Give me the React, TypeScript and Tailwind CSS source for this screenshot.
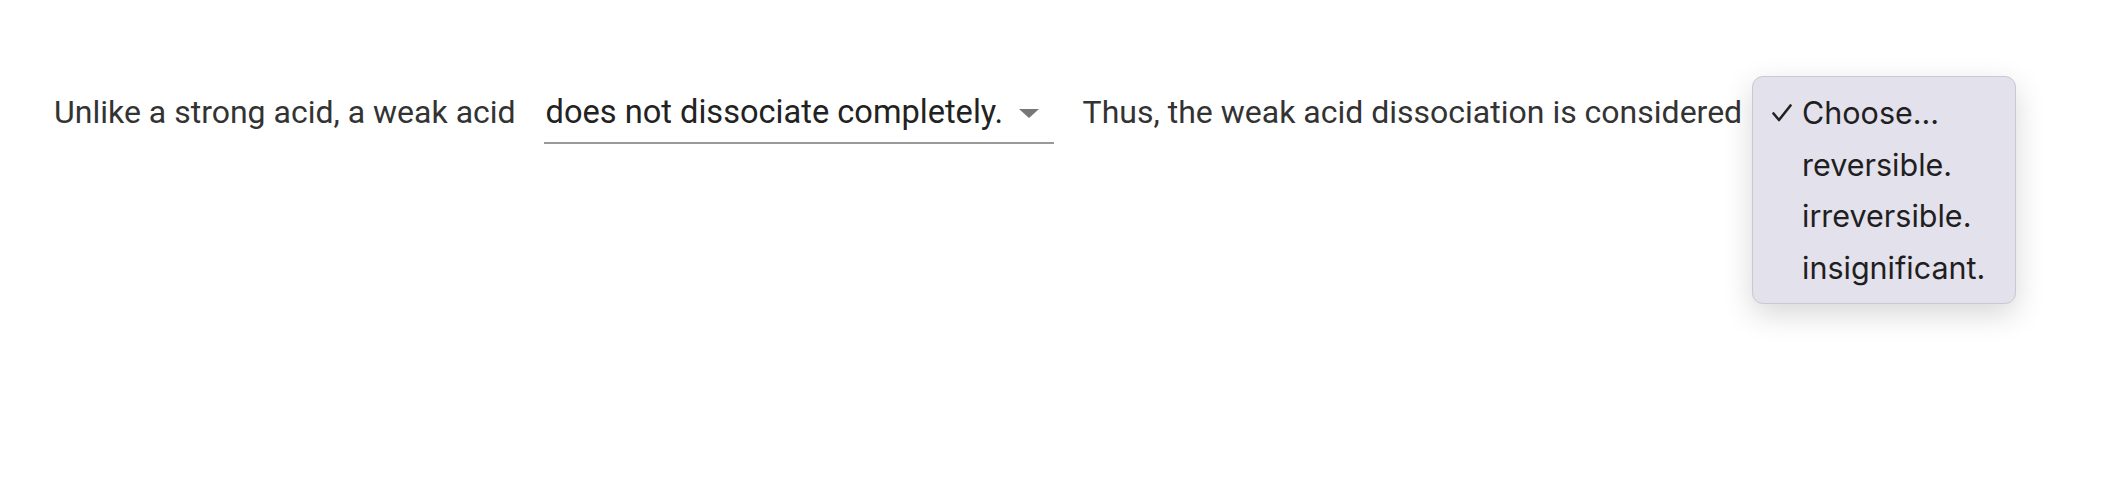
import React from 'react';

const options = ['Choose...', 'reversible.', 'irreversible.', 'insignificant.'];

const CheckMark: React.FC = () => (
  <svg width="20" height="18" viewBox="0 0 20 18" className="shrink-0">
    <polyline points="1.5,9.5 7,16 18.5,1.5" fill="none" stroke="#222" strokeWidth="2.6" strokeLinecap="round" strokeLinejoin="round" />
  </svg>
);

export default function App() {
  return (
    <div className="relative w-[2110px] h-[500px] bg-white font-['Roboto',sans-serif]">
      {/* Sentence with inline selects */}
      <div className="flex items-baseline pt-[92px] pl-[54px] text-[32px] leading-[40px] text-[#333]">
        <span>Unlike a strong acid, a weak acid</span>

        {/* Closed select */}
        <div className="ml-[28px] flex items-center w-[510px] pl-[2px] pr-[15px] pb-[10px] border-b-2 border-[#999] text-[32.6px] text-[#222]">
          <span className="flex-1">does not dissociate completely.</span>
          <svg width="20" height="10" viewBox="0 0 20 10" className="mt-[4px]">
            <polygon points="0,0 20,0 10,9" fill="#777" />
          </svg>
        </div>

        <span className="ml-[29px]">Thus, the weak acid dissociation is considered</span>
      </div>

      {/* Open native-style menu */}
      <div className="absolute left-[1752px] top-[76px] w-[264px] h-[228px] rounded-[11px] border border-[#c9c7d0] bg-[#e3e1ec] shadow-[0_10px_30px_rgba(0,0,0,0.16)] pt-[10px] font-['Inter',sans-serif] text-[30.5px] leading-[51.5px] text-[#1f1f22]">
        {options.map((opt, i) => (
          <div key={opt} className="flex items-center">
            <div className="w-[49px] flex justify-end pr-[10px]">
              {i === 0 && <CheckMark />}
            </div>
            <span>{opt}</span>
          </div>
        ))}
      </div>
    </div>
  );
}
